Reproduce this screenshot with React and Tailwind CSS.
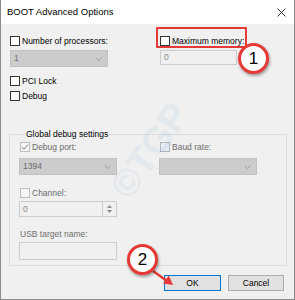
import React from "react";

const font = { fontFamily: '"Liberation Sans", Arial, sans-serif' };

function Check({ checked = false, disabled = false, label, blue = false }) {
  return (
    <div className="flex items-center h-[10px] gap-[2px]">
      <span
        className={
          "w-[10px] h-[10px] flex items-center justify-center border " +
          (disabled
            ? blue
              ? "border-[#b5b5b5] bg-[#e8eef5]"
              : "border-[#bcbcbc] bg-[#f7f7f7]"
            : "border-[#333333] bg-white")
        }
      >
        {checked && (
          <svg width="8" height="8" viewBox="0 0 8 8">
            <path d="M1 4.2 L3 6.2 L7 1.5" fill="none" stroke="#a0a0a0" strokeWidth="1.1" />
          </svg>
        )}
      </span>
      <span className={"text-[8.5px] leading-none " + (disabled ? "text-[#6d6d6d]" : "text-black")}>{label}</span>
    </div>
  );
}

function Combo({ value, w = "w-[98px]" }) {
  return (
    <div className={w + " h-[17px] bg-[#cccccc] border border-[#c2c2c2] flex items-center justify-between pl-[3px] pr-[5px]"}>
      <span className="text-[8.5px] text-[#6d6d6d]">{value}</span>
      <svg width="7" height="4" viewBox="0 0 7 4">
        <path d="M0.5 0.5 L3.5 3.5 L6.5 0.5" fill="none" stroke="#9a9a9a" strokeWidth="0.9" />
      </svg>
    </div>
  );
}

export default function App() {
  return (
    <div style={font} className="relative w-[295px] h-[300px] bg-[#f0f0f0] border-l border-r border-b border-[#8a8a8a] flex flex-col overflow-hidden">
      {/* title bar */}
      <div className="h-[24px] bg-white flex items-center justify-between pl-[6px] pr-[8px] shrink-0">
        <span className="text-[9.5px] text-black">BOOT Advanced Options</span>
        <svg width="9" height="9" viewBox="0 0 9 9">
          <path d="M0.5 0.5 L8.5 8.5 M8.5 0.5 L0.5 8.5" stroke="#333" strokeWidth="1" />
        </svg>
      </div>

      <div className="flex-1 pl-[8px] pr-[7px] pt-[12px] flex flex-col">
        <div className="ml-[1px] grid grid-cols-[150px_1fr]">
          <div className="flex flex-col">
            <Check label="Number of processors:" />
            <div className="mt-[4px]">
              <Combo value="1" />
            </div>
          </div>
          <div className="flex flex-col">
            <Check label="Maximum memory:" />
            <div className="mt-[4px] w-[77px] h-[15px] border border-[#cccccc] bg-[#f0f0f0] flex items-center pl-[3px]">
              <span className="text-[8.5px] text-[#8a8a8a]">0</span>
            </div>
          </div>
        </div>

        <div className="ml-[1px] mt-[9px] flex flex-col gap-[5px]">
          <Check label="PCI Lock" />
          <Check label="Debug" />
        </div>

        <fieldset className="mt-[28px] border border-[#dcdcdc] pl-[9px] pb-[5px] pt-[3px]">
          <legend className="ml-[6px] px-[1px] text-[8.5px] leading-[10px] text-black">Global debug settings</legend>
          <div className="grid grid-cols-[140px_1fr]">
            <div className="flex flex-col">
              <div className="ml-[1px]">
                <Check checked disabled label="Debug port:" />
              </div>
              <div className="mt-[6px]">
                <Combo value="1394" />
              </div>
              <div className="ml-[1px] mt-[13px]">
                <Check disabled label="Channel:" />
              </div>
              <div className="mt-[3px] w-[98px] h-[16px] border border-[#cccccc] bg-[#f0f0f0] flex items-center justify-between">
                <span className="pl-[3px] text-[8.5px] text-[#8a8a8a]">0</span>
                <div className="w-[14px] h-full border-l border-[#cccccc] flex flex-col items-center justify-center gap-[2px]">
                  <svg width="5" height="3" viewBox="0 0 5 3"><path d="M0 3 L2.5 0 L5 3 Z" fill="#8a8a8a" /></svg>
                  <svg width="5" height="3" viewBox="0 0 5 3"><path d="M0 0 L2.5 3 L5 0 Z" fill="#8a8a8a" /></svg>
                </div>
              </div>
              <span className="ml-[1px] mt-[13px] text-[8.5px] leading-[9px] text-[#6d6d6d]">USB target name:</span>
              <div className="mt-[3px] w-[98px] h-[18px] border border-[#cccccc] bg-[#f0f0f0]" />
            </div>
            <div className="flex flex-col">
              <div className="ml-[1px]">
                <Check disabled blue label="Baud rate:" />
              </div>
              <div className="mt-[6px]">
                <Combo value="" />
              </div>
            </div>
          </div>
        </fieldset>

        <div className="mt-[9px] mr-[3px] flex justify-end gap-[7px]">
          <button className="w-[57px] h-[16px] bg-[#e1e1e1] border border-[#0078d7] text-[8.5px] text-black flex items-center justify-center">
            OK
          </button>
          <button className="w-[56px] h-[16px] bg-[#e1e1e1] border border-[#adadad] text-[8.5px] text-black flex items-center justify-center">
            Cancel
          </button>
        </div>
      </div>

      {/* watermark */}
      <span className="absolute left-[96px] top-[122px] -rotate-[55deg] text-[38px] font-bold text-[#4a8fd0] opacity-[0.07] pointer-events-none">
        ©TGP
      </span>

      {/* annotations */}
      <div className="absolute left-[155px] top-[27px] w-[91px] h-[21px] border-2 border-[#e53935] rounded-[1px]" />
      <div className="absolute left-[237px] top-[43px] w-[31px] h-[31px] rounded-full bg-white border-[3px] border-[#e53935] shadow-[1px_2px_3px_rgba(0,0,0,0.35)] flex items-center justify-center">
        <span className="text-[17px] leading-none text-black">1</span>
      </div>
      <svg className="absolute left-[140px] top-[260px]" width="40" height="30" viewBox="0 0 40 30">
        <path d="M12 11 L26 21" stroke="#e53935" strokeWidth="2.5" />
        <path d="M32 25 L22 23.5 L27.8 15.5 Z" fill="#e53935" />
      </svg>
      <div className="absolute left-[126px] top-[244px] w-[31px] h-[31px] rounded-full bg-white border-[3px] border-[#e53935] shadow-[1px_2px_3px_rgba(0,0,0,0.35)] flex items-center justify-center">
        <span className="text-[17px] leading-none text-black">2</span>
      </div>
    </div>
  );
}
